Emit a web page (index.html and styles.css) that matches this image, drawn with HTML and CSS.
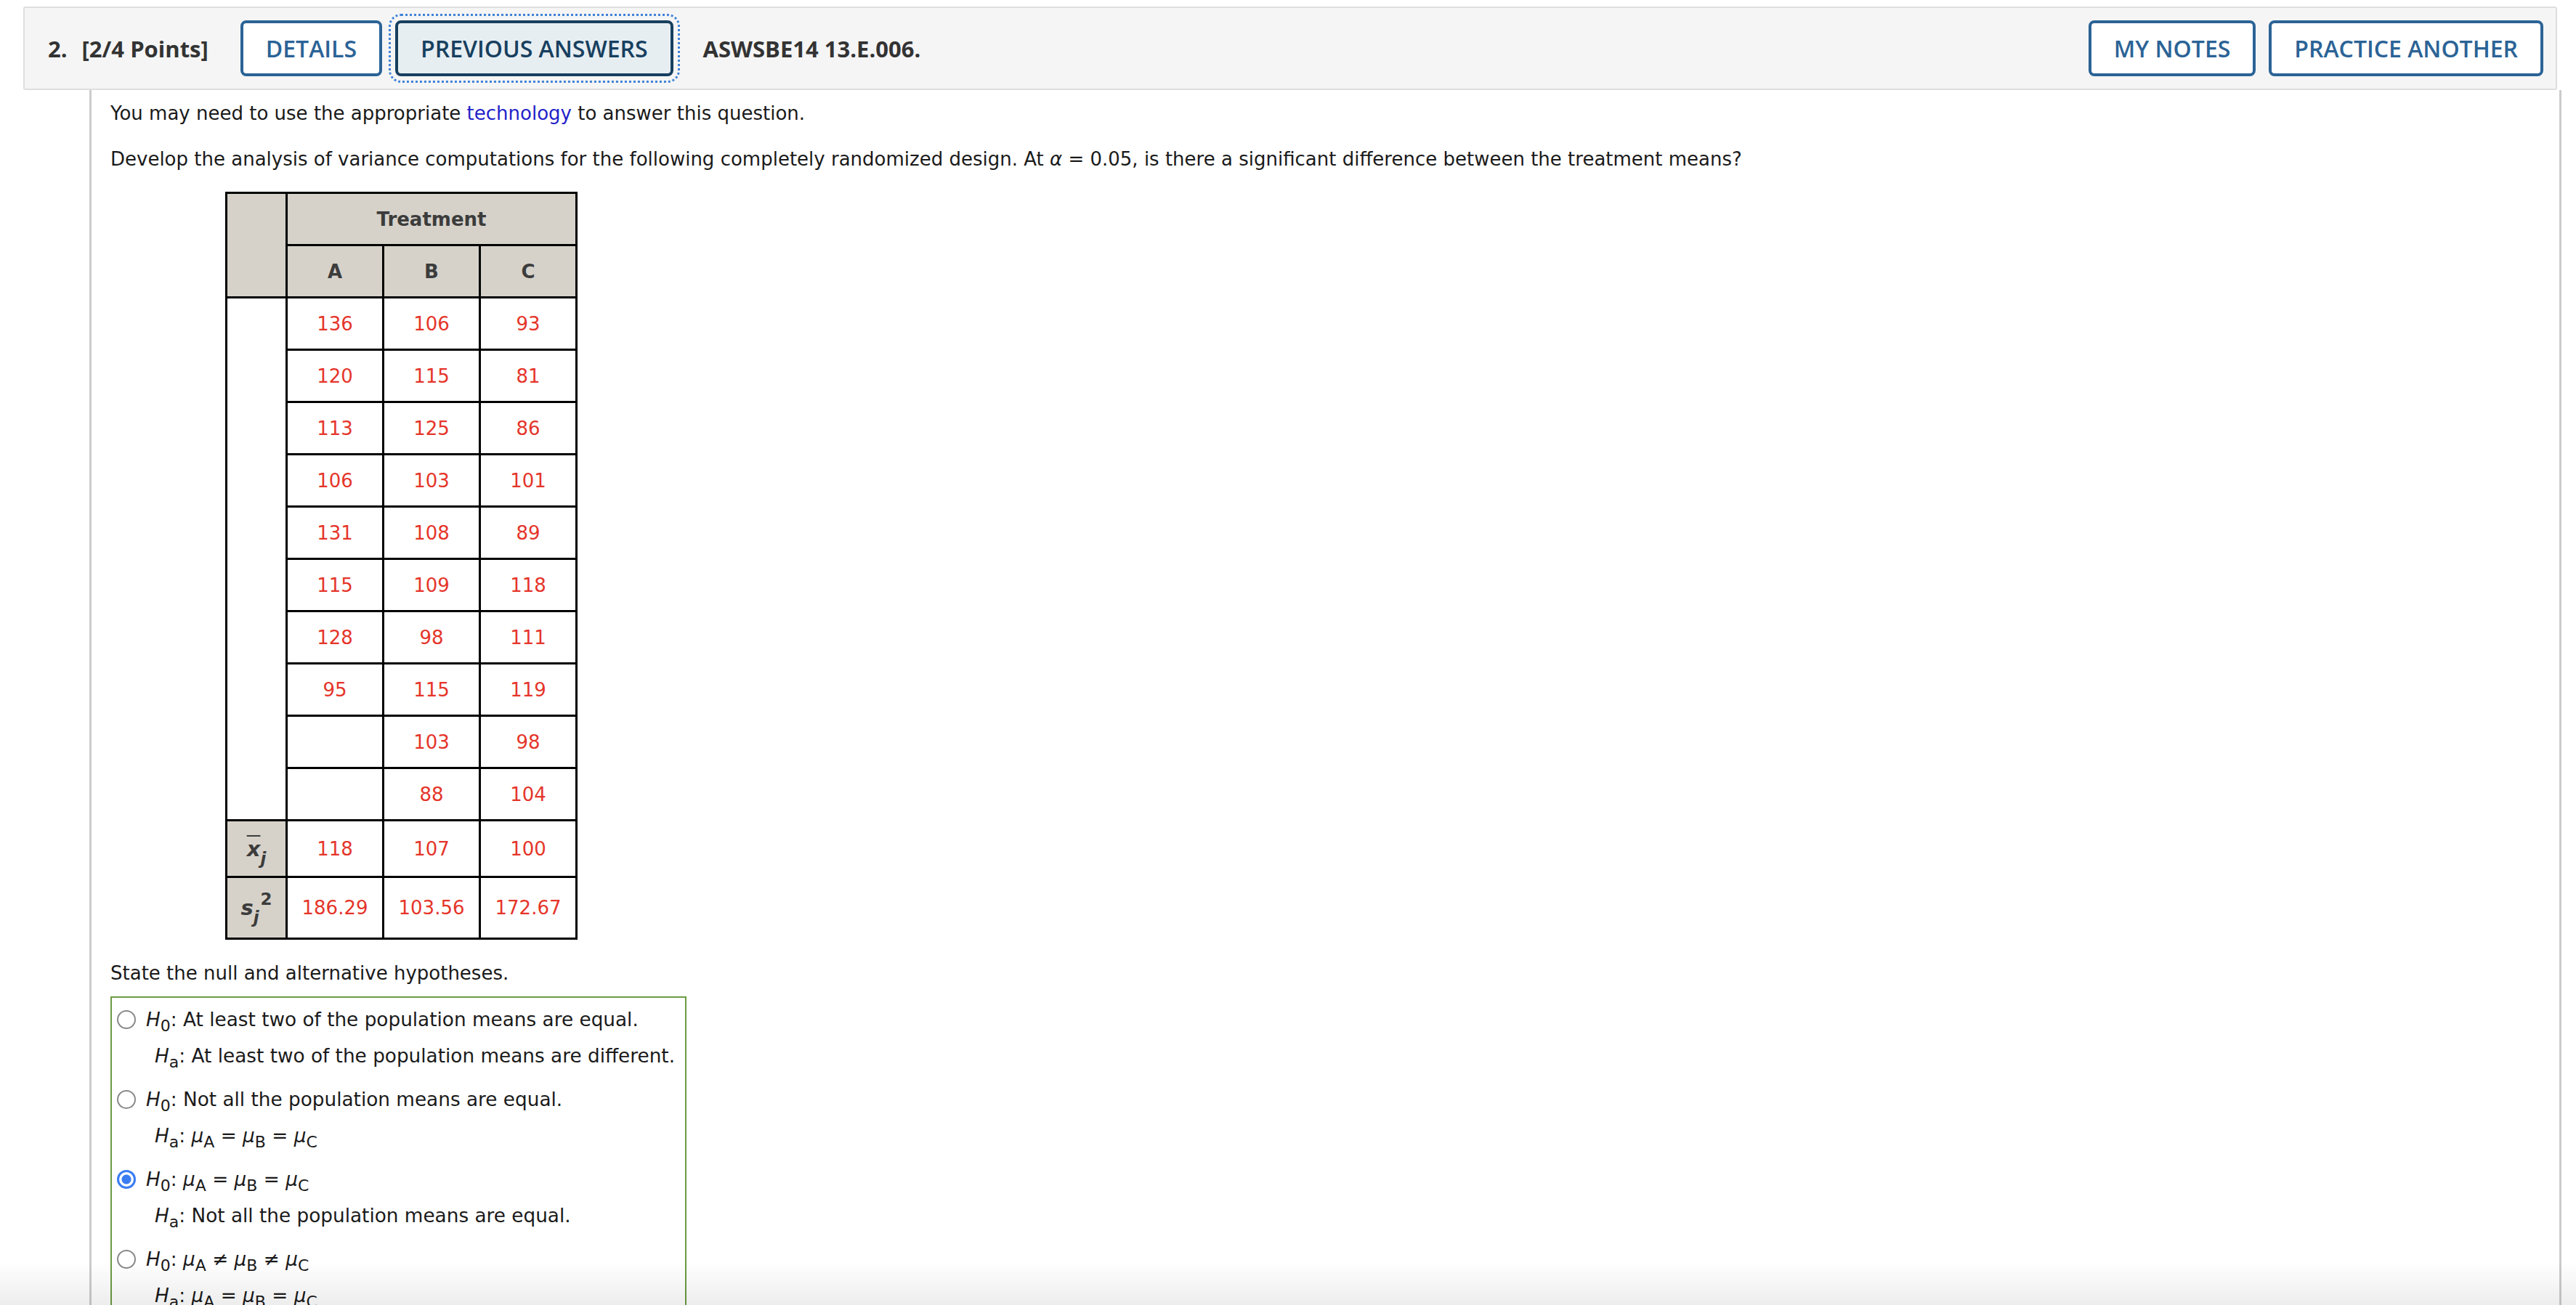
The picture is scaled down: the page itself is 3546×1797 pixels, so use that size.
FILE: index.html
```html
<!DOCTYPE html>
<html lang="en">
<head>
<meta charset="utf-8">
<title>Question 2</title>
<link rel="stylesheet" href="styles.css">
</head>
<body>
<div class="qhead">
  <div class="qtitle"><span class="qnum">2.</span><span>[2/4 Points]</span></div>
  <button class="btn">DETAILS</button>
  <button class="btn btn-active">PREVIOUS ANSWERS</button>
  <div class="qcode">ASWSBE14 13.E.006.</div>
  <div class="spacer"></div>
  <button class="btn">MY NOTES</button>
  <button class="btn">PRACTICE ANOTHER</button>
</div>

<div class="qbody">
  <p class="para">You may need to use the appropriate <a class="link" href="#">technology</a> to answer this question.</p>
  <p class="para">Develop the analysis of variance computations for the following completely randomized design. At <i class="alpha">α</i> = 0.05, is there a significant difference between the treatment means?</p>

  <table class="data">
    <colgroup><col class="c0"><col class="c1"><col class="c1"><col class="c1"></colgroup>
    <tr class="hrow"><th rowspan="2" class="corner"></th><th colspan="3">Treatment</th></tr>
    <tr class="hrow"><th>A</th><th>B</th><th>C</th></tr>
    <tr class="drow"><td rowspan="10" class="blank"></td><td>136</td><td>106</td><td>93</td></tr>
    <tr class="drow"><td>120</td><td>115</td><td>81</td></tr>
    <tr class="drow"><td>113</td><td>125</td><td>86</td></tr>
    <tr class="drow"><td>106</td><td>103</td><td>101</td></tr>
    <tr class="drow"><td>131</td><td>108</td><td>89</td></tr>
    <tr class="drow"><td>115</td><td>109</td><td>118</td></tr>
    <tr class="drow"><td>128</td><td>98</td><td>111</td></tr>
    <tr class="drow"><td>95</td><td>115</td><td>119</td></tr>
    <tr class="drow"><td></td><td>103</td><td>98</td></tr>
    <tr class="drow"><td></td><td>88</td><td>104</td></tr>
    <tr class="mrow"><th class="lab"><span class="xbar">x</span><span class="lsub">j</span></th><td>118</td><td>107</td><td>100</td></tr>
    <tr class="vrow"><th class="lab"><span class="svar">s</span><span class="lsub">j</span><span class="lsup">2</span></th><td>186.29</td><td>103.56</td><td>172.67</td></tr>
  </table>

  <p class="para prompt">State the null and alternative hypotheses.</p>

  <div class="choices">
    <div class="opt">
      <span class="radio"></span>
      <div class="opt-text">
        <div class="line"><i>H</i><sub>0</sub>: At least two of the population means are equal.</div>
        <div class="line ha"><i>H</i><sub>a</sub>: At least two of the population means are different.</div>
      </div>
    </div>
    <div class="opt">
      <span class="radio"></span>
      <div class="opt-text">
        <div class="line"><i>H</i><sub>0</sub>: Not all the population means are equal.</div>
        <div class="line ha"><i>H</i><sub>a</sub>: <i>μ</i><sub>A</sub> = <i>μ</i><sub>B</sub> = <i>μ</i><sub>C</sub></div>
      </div>
    </div>
    <div class="opt">
      <span class="radio checked"></span>
      <div class="opt-text">
        <div class="line"><i>H</i><sub>0</sub>: <i>μ</i><sub>A</sub> = <i>μ</i><sub>B</sub> = <i>μ</i><sub>C</sub></div>
        <div class="line ha"><i>H</i><sub>a</sub>: Not all the population means are equal.</div>
      </div>
    </div>
    <div class="opt">
      <span class="radio"></span>
      <div class="opt-text">
        <div class="line"><i>H</i><sub>0</sub>: <i>μ</i><sub>A</sub> ≠ <i>μ</i><sub>B</sub> ≠ <i>μ</i><sub>C</sub></div>
        <div class="line ha"><i>H</i><sub>a</sub>: <i>μ</i><sub>A</sub> = <i>μ</i><sub>B</sub> = <i>μ</i><sub>C</sub></div>
      </div>
    </div>
  </div>
</div>

<div class="bottom-shade"></div>
</body>
</html>
```

FILE: styles.css
```css
html, body {
  margin: 0;
  padding: 0;
  background: #ffffff;
}

body {
  font-family: "DejaVu Sans", Verdana, sans-serif;
  color: #1a1a1a;
  font-size: 26px;
}

/* ---------- question header ---------- */
.qhead {
  display: flex;
  align-items: center;
  margin: 9px 26px 0 32px;
  height: 115px;
  box-sizing: border-box;
  padding: 0 17px 0 32px;
  background: #f5f5f5;
  border: 2px solid #dedede;
  border-radius: 3px;
  font-family: "Open Sans", "Liberation Sans", sans-serif;
}

.qtitle {
  font-size: 31px;
  font-weight: 700;
  color: #333333;
  margin-right: 44px;
  white-space: nowrap;
}

.qnum {
  margin-right: 20px;
}

.btn {
  height: 77px;
  box-sizing: border-box;
  padding: 0 31px;
  border: 4px solid #2b6396;
  border-radius: 8px;
  background: #ffffff;
  color: #2b6396;
  font-family: "Open Sans", "Liberation Sans", sans-serif;
  font-size: 32px;
  font-weight: 600;
  white-space: nowrap;
  margin-right: 18px;
  cursor: pointer;
}

.btn:last-child {
  margin-right: 0;
}

.btn-active {
  background: #e7eef2;
  border-color: #173f5f;
  color: #173f5f;
  outline: 3px dotted #3f83d9;
  outline-offset: 6px;
}

.qcode {
  font-size: 31px;
  font-weight: 700;
  color: #333333;
  margin-left: 23px;
  white-space: nowrap;
}

.spacer {
  flex: 1;
}

/* ---------- question body ---------- */
.qbody {
  margin: 0 20px 0 123px;
  padding: 14px 26px 40px 26px;
  border-left: 3px solid #cccccc;
  border-right: 3px solid #cccccc;
  min-height: 1700px;
}

.para {
  margin: 0 0 27px 0;
  line-height: 36px;
}

.link {
  color: #2323c8;
  text-decoration: none;
}

.alpha {
  font-style: italic;
}

/* ---------- data table ---------- */
.data {
  margin-left: 158px;
  border-collapse: collapse;
  table-layout: fixed;
  width: 483px;
  border: 3px solid #000;
}

.c0 { width: 83px; }
.c1 { width: 133px; }

.data th,
.data td {
  border: 3px solid #000;
  padding: 0;
  text-align: center;
  vertical-align: middle;
}

.data th {
  background: #d6d2ca;
  color: #3c3c3c;
  font-weight: 700;
}

.data td {
  color: #e5352a;
}

.data td.blank {
  background: #ffffff;
}

.hrow { height: 72px; }
.drow { height: 72px; }
.mrow { height: 78px; }
.vrow { height: 85px; }

.lab {
  font-style: italic;
  font-size: 29px;
}

.xbar {
  text-decoration: overline;
  text-decoration-thickness: 2px;
}

.lsub {
  font-size: 23px;
  position: relative;
  top: 11px;
}

.lsup {
  font-size: 23px;
  font-style: normal;
  position: relative;
  top: -14px;
  margin-left: 2px;
}

/* ---------- multiple choice ---------- */
.prompt {
  margin-top: 28px;
  margin-bottom: 14px;
}

.choices {
  display: inline-block;
  border: 2px solid #6b9b43;
  padding: 5px 14px 0 7px;
  font-size: 26.3px;
}

.opt {
  display: flex;
  align-items: flex-start;
  margin-bottom: 10px;
}

.radio {
  flex: none;
  width: 26px;
  height: 26px;
  box-sizing: border-box;
  border: 2px solid #8a8a8a;
  border-radius: 50%;
  background: #ffffff;
  margin-top: 12px;
  margin-right: 14px;
}

.radio.checked {
  border: 3px solid #3a7cf2;
  background: radial-gradient(circle, #3a7cf2 0 6px, #ffffff 7px);
}

.line {
  height: 50px;
  line-height: 50px;
  white-space: nowrap;
}

.line.ha {
  padding-left: 12px;
}

.line i {
  font-style: italic;
}

.line sub {
  font-size: 22px;
  line-height: 0;
  vertical-align: -7px;
}

/* soft shadow at the bottom of the viewport */
.bottom-shade {
  position: fixed;
  left: 0;
  right: 0;
  bottom: 0;
  height: 60px;
  background: linear-gradient(to bottom, rgba(0,0,0,0), rgba(0,0,0,0.07));
  pointer-events: none;
}
```
